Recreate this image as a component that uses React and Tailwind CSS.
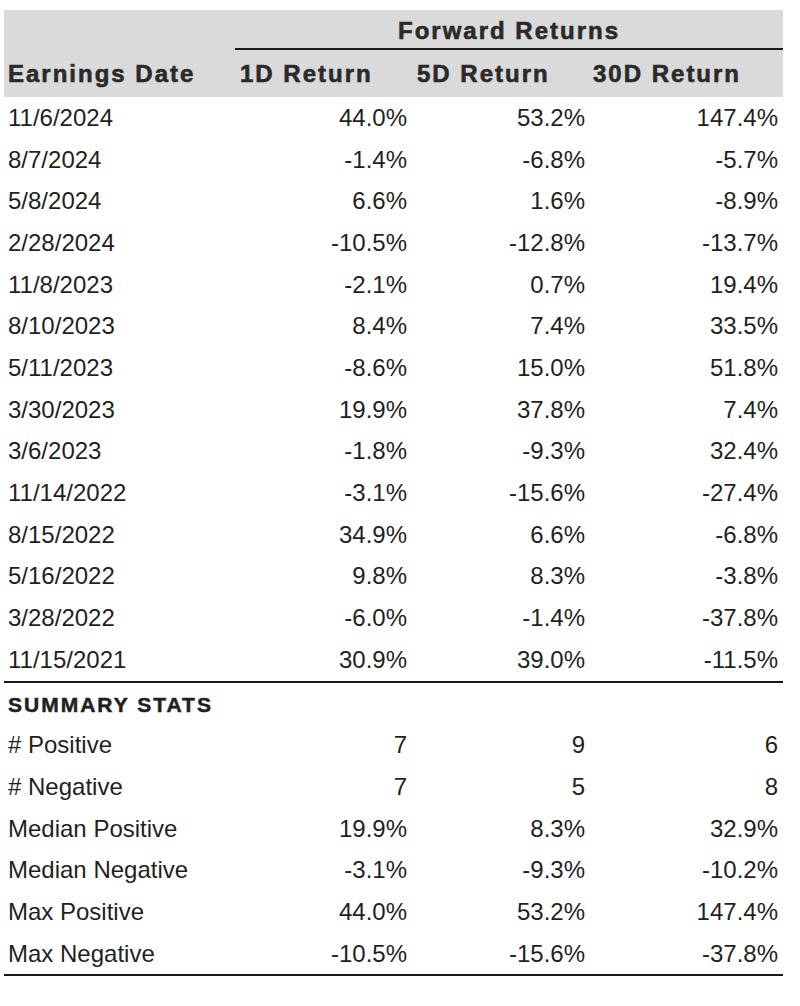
import React from 'react';

const rows = [
  ['11/6/2024', '44.0%', '53.2%', '147.4%'],
  ['8/7/2024', '-1.4%', '-6.8%', '-5.7%'],
  ['5/8/2024', '6.6%', '1.6%', '-8.9%'],
  ['2/28/2024', '-10.5%', '-12.8%', '-13.7%'],
  ['11/8/2023', '-2.1%', '0.7%', '19.4%'],
  ['8/10/2023', '8.4%', '7.4%', '33.5%'],
  ['5/11/2023', '-8.6%', '15.0%', '51.8%'],
  ['3/30/2023', '19.9%', '37.8%', '7.4%'],
  ['3/6/2023', '-1.8%', '-9.3%', '32.4%'],
  ['11/14/2022', '-3.1%', '-15.6%', '-27.4%'],
  ['8/15/2022', '34.9%', '6.6%', '-6.8%'],
  ['5/16/2022', '9.8%', '8.3%', '-3.8%'],
  ['3/28/2022', '-6.0%', '-1.4%', '-37.8%'],
  ['11/15/2021', '30.9%', '39.0%', '-11.5%'],
];

const stats = [
  ['# Positive', '7', '9', '6'],
  ['# Negative', '7', '5', '8'],
  ['Median Positive', '19.9%', '8.3%', '32.9%'],
  ['Median Negative', '-3.1%', '-9.3%', '-10.2%'],
  ['Max Positive', '44.0%', '53.2%', '147.4%'],
  ['Max Negative', '-10.5%', '-15.6%', '-37.8%'],
];

const Row = ({ cells }) => (
  <div className="flex h-[41.7px] items-center">
    <div className="w-[231px] pl-1">{cells[0]}</div>
    <div className="w-[177px] pr-[5px] text-right">{cells[1]}</div>
    <div className="w-[178px] pr-[5px] text-right">{cells[2]}</div>
    <div className="flex-1 pr-[5px] text-right">{cells[3]}</div>
  </div>
);

export default function App() {
  return (
    <div className="min-h-[1006px] w-[800px] bg-white pt-[10px] pl-1 text-[24px] leading-none text-[#1f1f1f] [font-family:'Liberation_Sans',Arial,sans-serif]">
      <div className="w-[779px]">
        {/* Cabeçalho */}
        <div className="bg-[#dadada] font-bold tracking-[2px] text-[#2a2a2a] [-webkit-text-stroke:0.6px_#2a2a2a]">
          <div className="flex h-[38px]">
            <div className="w-[231px]" />
            <div className="flex flex-1 items-center justify-center pt-[3px]">Forward Returns</div>
          </div>
          <div className="ml-[231px] h-[2px] bg-[#1a1a1a]" />
          <div className="flex h-[47px] items-center pt-[1px]">
            <div className="w-[231px] pl-1">Earnings Date</div>
            <div className="w-[177px] pl-[5px]">1D Return</div>
            <div className="w-[178px] pl-[5px]">5D Return</div>
            <div className="flex-1 pl-[3px]">30D Return</div>
          </div>
        </div>

        {rows.map(r => (
          <Row key={r[0]} cells={r} />
        ))}

        <div className="h-[2px] bg-[#1a1a1a]" />

        <div className="flex h-[41.7px] items-center pl-1 pt-[3px] text-[21px] font-bold tracking-[2px] [-webkit-text-stroke:0.5px_#1f1f1f]">
          SUMMARY STATS
        </div>
        {stats.map(r => (
          <Row key={r[0]} cells={r} />
        ))}

        <div className="h-[2px] bg-[#1a1a1a]" />
      </div>
    </div>
  );
}
